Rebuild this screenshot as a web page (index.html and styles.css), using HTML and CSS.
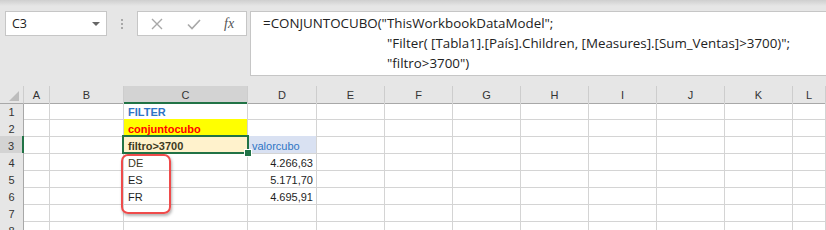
FILE: index.html
```html
<!DOCTYPE html>
<html lang="es">

<head>
    <meta charset="UTF-8">
    <title>CONJUNTOCUBO</title>
    <link rel="stylesheet" href="styles.css">
</head>

<body>
    <div class="toolbar">
        <div class="namebox">
            <span>C3</span>
            <span class="arrow"></span>
        </div>
        <div class="dots"><i></i><i></i><i></i></div>
        <div class="buttons">
            <svg class="btn" width="14" height="14" viewBox="0 0 14 14">
                <path d="M2 2 L12 12 M12 2 L2 12" stroke="#a8a8a8" stroke-width="1.4" fill="none" />
            </svg>
            <svg class="btn" width="16" height="14" viewBox="0 0 16 14">
                <path d="M2 7.5 L6 11.5 L14 3" stroke="#a8a8a8" stroke-width="1.6" fill="none" />
            </svg>
            <span class="fx">fx</span>
        </div>
        <div class="formula">
            <div class="line">=CONJUNTOCUBO("ThisWorkbookDataModel";</div>
            <div class="line indent">"Filter( [Tabla1].[País].Children, [Measures].[Sum_Ventas]&gt;3700)";</div>
            <div class="line indent">"filtro&gt;3700")</div>
        </div>
    </div>

    <div class="sheet">
        <div class="row head">
            <div class="corner"><span></span></div><div>A</div><div>B</div><div class="sel">C</div><div>D</div><div>E</div><div>F</div><div>G</div><div>H</div><div>I</div><div>J</div><div>K</div><div>L</div>
        </div>
        <div class="row">
            <div class="rh">1</div><div></div><div></div><div class="bold blue">FILTER</div><div></div><div></div><div></div><div></div><div></div><div></div><div></div><div></div><div></div>
        </div>
        <div class="row">
            <div class="rh">2</div><div></div><div></div><div class="bold red yellow">conjuntocubo</div><div></div><div></div><div></div><div></div><div></div><div></div><div></div><div></div><div></div>
        </div>
        <div class="row">
            <div class="rh sel">3</div><div></div><div></div><div class="bold olive cream">filtro&gt;3700</div><div class="blue lightblue">valorcubo</div><div></div><div></div><div></div><div></div><div></div><div></div><div></div><div></div>
        </div>
        <div class="row">
            <div class="rh">4</div><div></div><div></div><div class="olive">DE</div><div class="num">4.266,63</div><div></div><div></div><div></div><div></div><div></div><div></div><div></div><div></div>
        </div>
        <div class="row">
            <div class="rh">5</div><div></div><div></div><div>ES</div><div class="num">5.171,70</div><div></div><div></div><div></div><div></div><div></div><div></div><div></div><div></div>
        </div>
        <div class="row">
            <div class="rh">6</div><div></div><div></div><div>FR</div><div class="num">4.695,91</div><div></div><div></div><div></div><div></div><div></div><div></div><div></div><div></div>
        </div>
        <div class="row">
            <div class="rh">7</div><div></div><div></div><div></div><div></div><div></div><div></div><div></div><div></div><div></div><div></div><div></div><div></div>
        </div>
        <div class="row">
            <div class="rh">8</div><div></div><div></div><div></div><div></div><div></div><div></div><div></div><div></div><div></div><div></div><div></div><div></div>
        </div>

        <div class="selection"><span class="handle"></span></div>
        <div class="callout"></div>
    </div>
</body>

</html>
```

FILE: styles.css
```css
body {
    margin: 0;
    padding: 0;
    width: 826px;
    height: 230px;
    overflow: hidden;
    background-color: #e6e6e6;
    font-family: "Liberation Sans", Arial, sans-serif;
}

/* barra de fórmulas */
.toolbar {
    display: flex;
    align-items: flex-start;
    height: 86px;
    box-sizing: border-box;
    padding-top: 11px;
    background: linear-gradient(#cfcfcf 0, #e6e6e6 6px);
}

.namebox {
    display: flex;
    align-items: center;
    justify-content: space-between;
    margin-left: 5px;
    width: 102px;
    height: 25px;
    box-sizing: border-box;
    padding: 0 6px 0 6px;
    background-color: #fff;
    border: 1px solid #c6c6c6;
    font-family: "Open Sans", sans-serif;
    font-size: 12.5px;
    color: #222;
}

.arrow {
    width: 0;
    height: 0;
    border-left: 4px solid transparent;
    border-right: 4px solid transparent;
    border-top: 4px solid #666;
}

.dots {
    display: flex;
    flex-direction: column;
    align-items: center;
    gap: 2px;
    width: 30px;
    padding-top: 8px;
}

.dots i {
    display: block;
    width: 2px;
    height: 2px;
    background-color: #a8a8a8;
}

.buttons {
    display: flex;
    align-items: center;
    width: 110px;
    height: 25px;
    box-sizing: border-box;
    padding-left: 12px;
    background-color: #fff;
    border: 1px solid #c6c6c6;
}

.btn {
    margin-right: 22px;
}

.fx {
    font-family: "Liberation Serif", serif;
    font-style: italic;
    font-size: 14px;
    color: #555;
}

.formula {
    flex: 1;
    margin-left: 3px;
    height: 65px;
    box-sizing: border-box;
    padding: 1px 0 0 12px;
    background-color: #fff;
    border: 1px solid #c6c6c6;
    border-right: none;
    font-family: "Open Sans", sans-serif;
    font-size: 13.35px;
    line-height: 20px;
    color: #222;
    white-space: nowrap;
}

.indent {
    padding-left: 124px;
}

/* hoja */
.sheet {
    position: relative;
    background-color: #fff;
}

.row {
    display: grid;
    grid-template-columns: 24px 26px 74px 124px 69px repeat(7, 68px) 1fr;
    height: 17px;
}

.row > div {
    box-sizing: border-box;
    border-right: 1px solid #d4d4d4;
    border-bottom: 1px solid #d4d4d4;
    padding: 3px 3px 0 4px;
    font-size: 11px;
    line-height: 14px;
    color: #1e1e1e;
    white-space: nowrap;
}

.head {
    height: 16px;
}

.head > div {
    background-color: #e6e6e6;
    border-right-color: #cdcdcd;
    border-bottom-color: #a8a8a8;
    text-align: center;
    padding: 2px 0 0 0;
    color: #333;
}

.head > div.sel {
    background-color: #d3d3d3;
    border-bottom: 2px solid #217346;
}

.corner {
    position: relative;
}

.corner span {
    position: absolute;
    right: 4px;
    bottom: 2px;
    width: 0;
    height: 0;
    border-left: 10px solid transparent;
    border-bottom: 10px solid #bdbdbd;
}

.row > div.rh {
    background-color: #e6e6e6;
    border-right-color: #a8a8a8;
    border-bottom-color: #cdcdcd;
    text-align: center;
    padding: 3px 0 0 0;
    color: #333;
}

.row > div.rh.sel {
    background-color: #d3d3d3;
    border-right: 2px solid #217346;
}

.row > div.bold {
    font-weight: bold;
}

.row > div.blue {
    color: #2f75c5;
}

.row > div.red {
    color: #ff0000;
}

.row > div.olive {
    color: #3d3a22;
}

.yellow {
    background-color: #ffff00;
}

.cream {
    background-color: #fff2cc;
}

.lightblue {
    background-color: #d9e1f2;
}

.row > div.num {
    text-align: right;
    padding-right: 3px;
}

.selection {
    position: absolute;
    left: 122px;
    top: 49px;
    width: 127px;
    height: 19px;
    box-sizing: border-box;
    border: 2px solid #217346;
}

.handle {
    position: absolute;
    right: -5px;
    bottom: -5px;
    width: 6px;
    height: 6px;
    background-color: #217346;
    border: 1px solid #fff;
}

.callout {
    position: absolute;
    left: 121px;
    top: 68px;
    width: 50px;
    height: 60px;
    box-sizing: border-box;
    border: 2.5px solid #ef4b4b;
    border-radius: 7px;
    box-shadow: 1px 2px 3px rgba(0, 0, 0, 0.3);
}
```
